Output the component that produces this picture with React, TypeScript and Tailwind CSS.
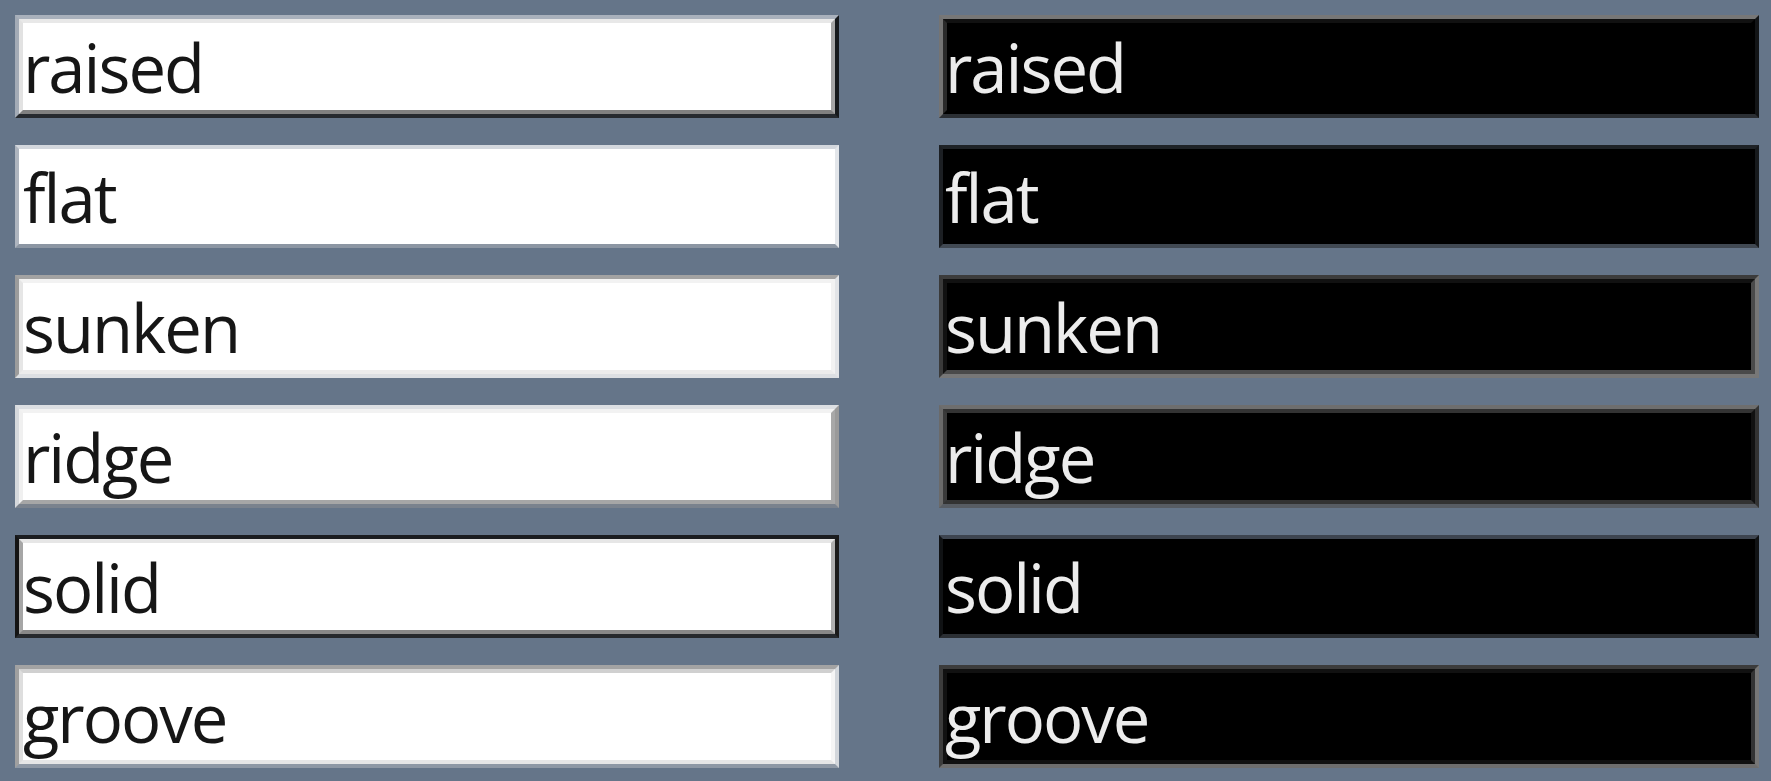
const light = [
  {
    label: 'raised',
    outer: 'border-t-[#a9b1bc] border-l-[#a3abb6] border-b-[#262a2f] border-r-[#16191c]',
    inner: 'border-t-[#e8e8e8] border-l-[#e2e2e2] border-b-[#808080] border-r-[#a6a6a6]',
  },
  {
    label: 'flat',
    outer: 'border-t-[#d3d7dd] border-l-[#aeb5bf] border-b-[#8c96a3] border-r-[#e3e6ea]',
    inner: 'border-t-white border-l-white border-b-white border-r-white',
  },
  {
    label: 'sunken',
    outer: 'border-t-[#a2a2a2] border-l-[#9c9c9c] border-b-[#dcdfe3] border-r-[#e2e4e7]',
    inner: 'border-t-[#f2f2f2] border-l-[#e6e6e6] border-b-[#ececec] border-r-[#f2f2f2]',
  },
  {
    label: 'ridge',
    outer: 'border-t-[#dcdfe3] border-l-[#d5d8dc] border-b-[#7a828d] border-r-[#9a9a9a]',
    inner: 'border-t-[#f2f2f2] border-l-[#f0f0f0] border-b-[#a6a6a6] border-r-[#a8a8a8]',
  },
  {
    label: 'solid',
    outer: 'border-t-[#1b1d20] border-l-[#141414] border-b-[#26292d] border-r-[#1a1a1a]',
    inner: 'border-t-[#e6e6e6] border-l-[#a6a6a6] border-b-[#888888] border-r-[#b0b0b0]',
  },
  {
    label: 'groove',
    outer: 'border-t-[#a3a3a3] border-l-[#a0a0a0] border-b-[#8e98a5] border-r-[#d2d6db]',
    inner: 'border-t-[#d0d0d0] border-l-[#dedede] border-b-[#e6e6e6] border-r-[#f5f5f5]',
  },
];

const dark = [
  {
    label: 'raised',
    outer: 'border-t-[#777777] border-l-[#747474] border-b-[#2b2f34] border-r-[#121416]',
    inner: 'border-t-[#111111] border-l-[#2a2a2a] border-b-black border-r-black',
  },
  {
    label: 'flat',
    outer: 'border-t-[#1f2327] border-l-[#1c1f23] border-b-[#414953] border-r-[#16191c]',
    inner: 'border-t-black border-l-black border-b-black border-r-black',
  },
  {
    label: 'sunken',
    outer: 'border-t-[#3c3c3c] border-l-[#3a3a3a] border-b-[#777777] border-r-[#777777]',
    inner: 'border-t-[#111111] border-l-[#111111] border-b-[#4a4a4a] border-r-[#4a4a4a]',
  },
  {
    label: 'ridge',
    outer: 'border-t-[#6e6e6e] border-l-[#6a6a6a] border-b-[#575c63] border-r-[#333333]',
    inner: 'border-t-[#333333] border-l-[#3a3a3a] border-b-[#333333] border-r-[#111111]',
  },
  {
    label: 'solid',
    outer: 'border-t-[#3e4550] border-l-[#101214] border-b-[#2b2f34] border-r-[#101214]',
    inner: 'border-t-black border-l-black border-b-black border-r-black',
  },
  {
    label: 'groove',
    outer: 'border-t-[#3c3c3c] border-l-[#3c3c3c] border-b-[#6e6e6e] border-r-[#777777]',
    inner: 'border-t-[#111111] border-l-[#111111] border-b-[#111111] border-r-[#333333]',
  },
];

type Relief = { label: string; outer: string; inner: string };

function ReliefBox({ item, dark }: { item: Relief; dark?: boolean }) {
  return (
    <div className={`h-[103px] border-4 ${item.outer}`}>
      <div className={`h-full border-4 ${item.inner} ${dark ? 'bg-black' : 'bg-white'}`}>
        <span
          className={`block text-[67px] font-medium leading-[1.32] tracking-[-0.03em] whitespace-nowrap ${
            dark ? 'text-[#ececec] -ml-[2px]' : 'text-[#161616]'
          }`}
          style={{ fontFamily: '"Open Sans", "Noto Sans", sans-serif' }}
        >
          {item.label}
        </span>
      </div>
    </div>
  );
}

export default function App() {
  return (
    <div className="w-[1771px] h-[781px] overflow-hidden bg-[#657589] pl-[15px] pr-[12px] pt-[15px]">
      <div className="grid grid-cols-[824px_820px] gap-x-[100px]">
        <div className="flex flex-col gap-[27px]">
          {light.map((item) => (
            <ReliefBox key={item.label} item={item} />
          ))}
        </div>
        <div className="flex flex-col gap-[27px]">
          {dark.map((item) => (
            <ReliefBox key={item.label} item={item} dark />
          ))}
        </div>
      </div>
    </div>
  );
}
